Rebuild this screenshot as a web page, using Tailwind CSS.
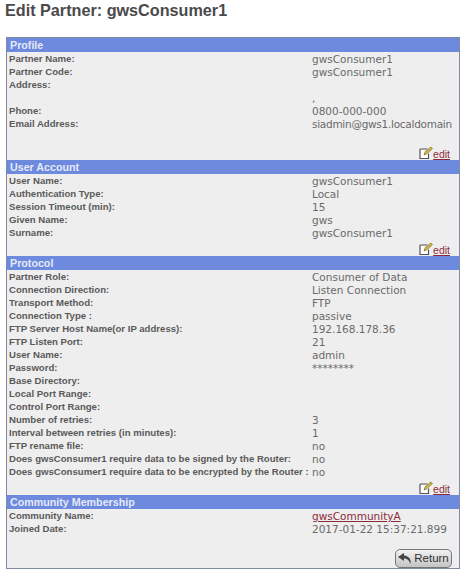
<!DOCTYPE html>
<html lang="en">
<head>
    <meta charset="UTF-8" />
    <title>Edit Partner</title>
    <script src="https://cdn.jsdelivr.net/npm/@tailwindcss/browser@4"></script>
</head>
<body class="bg-white w-[474px] h-[583px] overflow-hidden font-['Liberation_Sans',Arial,sans-serif]">
<h1 class="pl-[5px] pt-[2px] h-[37px] text-[16.2px] leading-[17px] font-bold text-[#4a4a4a]">Edit Partner: gwsConsumer1</h1>

<div class="mx-[6px] w-[454px] h-[532px] border border-[#7f8aa0] bg-[#eeeeee] text-[9.6px] whitespace-nowrap">

    <div class="h-[14px] bg-[#6d8ade] pl-[3px] font-bold text-[#e4e9f8] text-[10.7px] leading-[14px]">Profile</div>
    <div class="h-[108px] relative pt-[1px]">
        <div class="flex h-[13px]"><div class="w-[305px] pl-[2px] font-bold leading-[11px] text-[#5a5a5a]">Partner Name:</div><div class="font-['DejaVu_Sans',sans-serif] text-[10.5px] leading-[13px] text-[#6a6a6a]">gwsConsumer1</div></div>
        <div class="flex h-[13px]"><div class="w-[305px] pl-[2px] font-bold leading-[11px] text-[#5a5a5a]">Partner Code:</div><div class="font-['DejaVu_Sans',sans-serif] text-[10.5px] leading-[13px] text-[#6a6a6a]">gwsConsumer1</div></div>
        <div class="flex h-[13px]"><div class="w-[305px] pl-[2px] font-bold leading-[11px] text-[#5a5a5a]">Address:</div></div>
        <div class="flex h-[13px]"><div class="w-[305px]"></div><div class="font-['DejaVu_Sans',sans-serif] text-[10.5px] leading-[13px] text-[#6a6a6a]">,</div></div>
        <div class="flex h-[13px]"><div class="w-[305px] pl-[2px] font-bold leading-[11px] text-[#5a5a5a]">Phone:</div><div class="font-['DejaVu_Sans',sans-serif] text-[10.5px] leading-[13px] text-[#6a6a6a]">0800-000-000</div></div>
        <div class="flex h-[13px]"><div class="w-[305px] pl-[2px] font-bold leading-[11px] text-[#5a5a5a]">Email Address:</div><div class="font-['DejaVu_Sans',sans-serif] text-[10.5px] leading-[13px] tracking-[-0.27px] text-[#6a6a6a]">siadmin@gws1.localdomain</div></div>
        <div class="absolute right-[9px] bottom-[0px] flex items-end">
            <svg width="14" height="14" viewBox="0 0 14 14"><path d="M1 3h7.500M1 3v9.500h8.500v-5" fill="#fff" stroke="#555" stroke-width="1.2"/><path d="M5 9l1-3 6-5 1.500 1.500-6 5.500z" fill="#d8b840" stroke="#6b5a20" stroke-width=".6"/></svg>
            <a class="text-[#8b2b3a] underline text-[10.5px] leading-[12px]">edit</a>
        </div>
    </div>

    <div class="h-[14px] bg-[#6d8ade] pl-[3px] font-bold text-[#e4e9f8] text-[10.7px] leading-[14px]">User Account</div>
    <div class="h-[82px] relative pt-[1px]">
        <div class="flex h-[13px]"><div class="w-[305px] pl-[2px] font-bold leading-[11px] text-[#5a5a5a]">User Name:</div><div class="font-['DejaVu_Sans',sans-serif] text-[10.5px] leading-[13px] text-[#6a6a6a]">gwsConsumer1</div></div>
        <div class="flex h-[13px]"><div class="w-[305px] pl-[2px] font-bold leading-[11px] text-[#5a5a5a]">Authentication Type:</div><div class="font-['DejaVu_Sans',sans-serif] text-[10.5px] leading-[13px] text-[#6a6a6a]">Local</div></div>
        <div class="flex h-[13px]"><div class="w-[305px] pl-[2px] font-bold leading-[11px] text-[#5a5a5a]">Session Timeout (min):</div><div class="font-['DejaVu_Sans',sans-serif] text-[10.5px] leading-[13px] text-[#6a6a6a]">15</div></div>
        <div class="flex h-[13px]"><div class="w-[305px] pl-[2px] font-bold leading-[11px] text-[#5a5a5a]">Given Name:</div><div class="font-['DejaVu_Sans',sans-serif] text-[10.5px] leading-[13px] text-[#6a6a6a]">gws</div></div>
        <div class="flex h-[13px]"><div class="w-[305px] pl-[2px] font-bold leading-[11px] text-[#5a5a5a]">Surname:</div><div class="font-['DejaVu_Sans',sans-serif] text-[10.5px] leading-[13px] text-[#6a6a6a]">gwsConsumer1</div></div>
        <div class="absolute right-[9px] bottom-[0px] flex items-end">
            <svg width="14" height="14" viewBox="0 0 14 14"><path d="M1 3h7.500M1 3v9.500h8.500v-5" fill="#fff" stroke="#555" stroke-width="1.2"/><path d="M5 9l1-3 6-5 1.500 1.500-6 5.500z" fill="#d8b840" stroke="#6b5a20" stroke-width=".6"/></svg>
            <a class="text-[#8b2b3a] underline text-[10.5px] leading-[12px]">edit</a>
        </div>
    </div>

    <div class="h-[14px] bg-[#6d8ade] pl-[3px] font-bold text-[#e4e9f8] text-[10.7px] leading-[14px]">Protocol</div>
    <div class="h-[225px] relative pt-[1px]">
        <div class="flex h-[13px]"><div class="w-[305px] pl-[2px] font-bold leading-[11px] text-[#5a5a5a]">Partner Role:</div><div class="font-['DejaVu_Sans',sans-serif] text-[10.5px] leading-[13px] text-[#6a6a6a]">Consumer of Data</div></div>
        <div class="flex h-[13px]"><div class="w-[305px] pl-[2px] font-bold leading-[11px] text-[#5a5a5a]">Connection Direction:</div><div class="font-['DejaVu_Sans',sans-serif] text-[10.5px] leading-[13px] text-[#6a6a6a]">Listen Connection</div></div>
        <div class="flex h-[13px]"><div class="w-[305px] pl-[2px] font-bold leading-[11px] text-[#5a5a5a]">Transport Method:</div><div class="font-['DejaVu_Sans',sans-serif] text-[10.5px] leading-[13px] text-[#6a6a6a]">FTP</div></div>
        <div class="flex h-[13px]"><div class="w-[305px] pl-[2px] font-bold leading-[11px] text-[#5a5a5a]">Connection Type :</div><div class="font-['DejaVu_Sans',sans-serif] text-[10.5px] leading-[13px] text-[#6a6a6a]">passive</div></div>
        <div class="flex h-[13px]"><div class="w-[305px] pl-[2px] font-bold leading-[11px] text-[#5a5a5a]">FTP Server Host Name(or IP address):</div><div class="font-['DejaVu_Sans',sans-serif] text-[10.5px] leading-[13px] text-[#6a6a6a]">192.168.178.36</div></div>
        <div class="flex h-[13px]"><div class="w-[305px] pl-[2px] font-bold leading-[11px] text-[#5a5a5a]">FTP Listen Port:</div><div class="font-['DejaVu_Sans',sans-serif] text-[10.5px] leading-[13px] text-[#6a6a6a]">21</div></div>
        <div class="flex h-[13px]"><div class="w-[305px] pl-[2px] font-bold leading-[11px] text-[#5a5a5a]">User Name:</div><div class="font-['DejaVu_Sans',sans-serif] text-[10.5px] leading-[13px] text-[#6a6a6a]">admin</div></div>
        <div class="flex h-[13px]"><div class="w-[305px] pl-[2px] font-bold leading-[11px] text-[#5a5a5a]">Password:</div><div class="font-['DejaVu_Sans',sans-serif] text-[10.5px] leading-[13px] text-[#6a6a6a]">********</div></div>
        <div class="flex h-[13px]"><div class="w-[305px] pl-[2px] font-bold leading-[11px] text-[#5a5a5a]">Base Directory:</div></div>
        <div class="flex h-[13px]"><div class="w-[305px] pl-[2px] font-bold leading-[11px] text-[#5a5a5a]">Local Port Range:</div></div>
        <div class="flex h-[13px]"><div class="w-[305px] pl-[2px] font-bold leading-[11px] text-[#5a5a5a]">Control Port Range:</div></div>
        <div class="flex h-[13px]"><div class="w-[305px] pl-[2px] font-bold leading-[11px] text-[#5a5a5a]">Number of retries:</div><div class="font-['DejaVu_Sans',sans-serif] text-[10.5px] leading-[13px] text-[#6a6a6a]">3</div></div>
        <div class="flex h-[13px]"><div class="w-[305px] pl-[2px] font-bold leading-[11px] text-[#5a5a5a]">Interval between retries (in minutes):</div><div class="font-['DejaVu_Sans',sans-serif] text-[10.5px] leading-[13px] text-[#6a6a6a]">1</div></div>
        <div class="flex h-[13px]"><div class="w-[305px] pl-[2px] font-bold leading-[11px] text-[#5a5a5a]">FTP rename file:</div><div class="font-['DejaVu_Sans',sans-serif] text-[10.5px] leading-[13px] text-[#6a6a6a]">no</div></div>
        <div class="flex h-[13px]"><div class="w-[305px] pl-[2px] font-bold leading-[11px] text-[#5a5a5a]">Does gwsConsumer1 require data to be signed by the Router:</div><div class="font-['DejaVu_Sans',sans-serif] text-[10.5px] leading-[13px] text-[#6a6a6a]">no</div></div>
        <div class="flex h-[13px]"><div class="w-[305px] pl-[2px] font-bold leading-[11px] text-[#5a5a5a]">Does gwsConsumer1 require data to be encrypted by the Router :</div><div class="font-['DejaVu_Sans',sans-serif] text-[10.5px] leading-[13px] text-[#6a6a6a]">no</div></div>
        <div class="absolute right-[9px] bottom-[0px] flex items-end">
            <svg width="14" height="14" viewBox="0 0 14 14"><path d="M1 3h7.500M1 3v9.500h8.500v-5" fill="#fff" stroke="#555" stroke-width="1.2"/><path d="M5 9l1-3 6-5 1.500 1.500-6 5.500z" fill="#d8b840" stroke="#6b5a20" stroke-width=".6"/></svg>
            <a class="text-[#8b2b3a] underline text-[10.5px] leading-[12px]">edit</a>
        </div>
    </div>

    <div class="h-[14px] bg-[#6d8ade] pl-[3px] font-bold text-[#e4e9f8] text-[10.7px] leading-[14px]">Community Membership</div>
    <div class="relative h-[59px] pt-[1px]">
        <div class="flex h-[13px]"><div class="w-[305px] pl-[2px] font-bold leading-[11px] text-[#5a5a5a]">Community Name:</div><a class="font-['DejaVu_Sans',sans-serif] text-[10.5px] leading-[13px] text-[#8b2b3a] underline">gwsCommunityA</a></div>
        <div class="flex h-[13px]"><div class="w-[305px] pl-[2px] font-bold leading-[11px] text-[#5a5a5a]">Joined Date:</div><div class="font-['DejaVu_Sans',sans-serif] text-[10.5px] leading-[13px] text-[#6a6a6a]">2017-01-22 15:37:21.899</div></div>
        <button class="absolute right-[7px] bottom-[0px] w-[57px] h-[19px] flex items-center justify-center gap-[2px] rounded-[5px] border border-[#777] bg-gradient-to-b from-[#f2f2f2] to-[#c4c4c4] text-[11.5px] text-[#333]">
            <svg width="14" height="11" viewBox="0 0 14 11"><path d="M6 0L0 4l6 4V5.500c3 0 5 1.500 6.500 5.500 1-4.500-1.500-8-6.500-8.500z" fill="#444"/></svg>
            Return
        </button>
    </div>
</div>
</body>
</html>
